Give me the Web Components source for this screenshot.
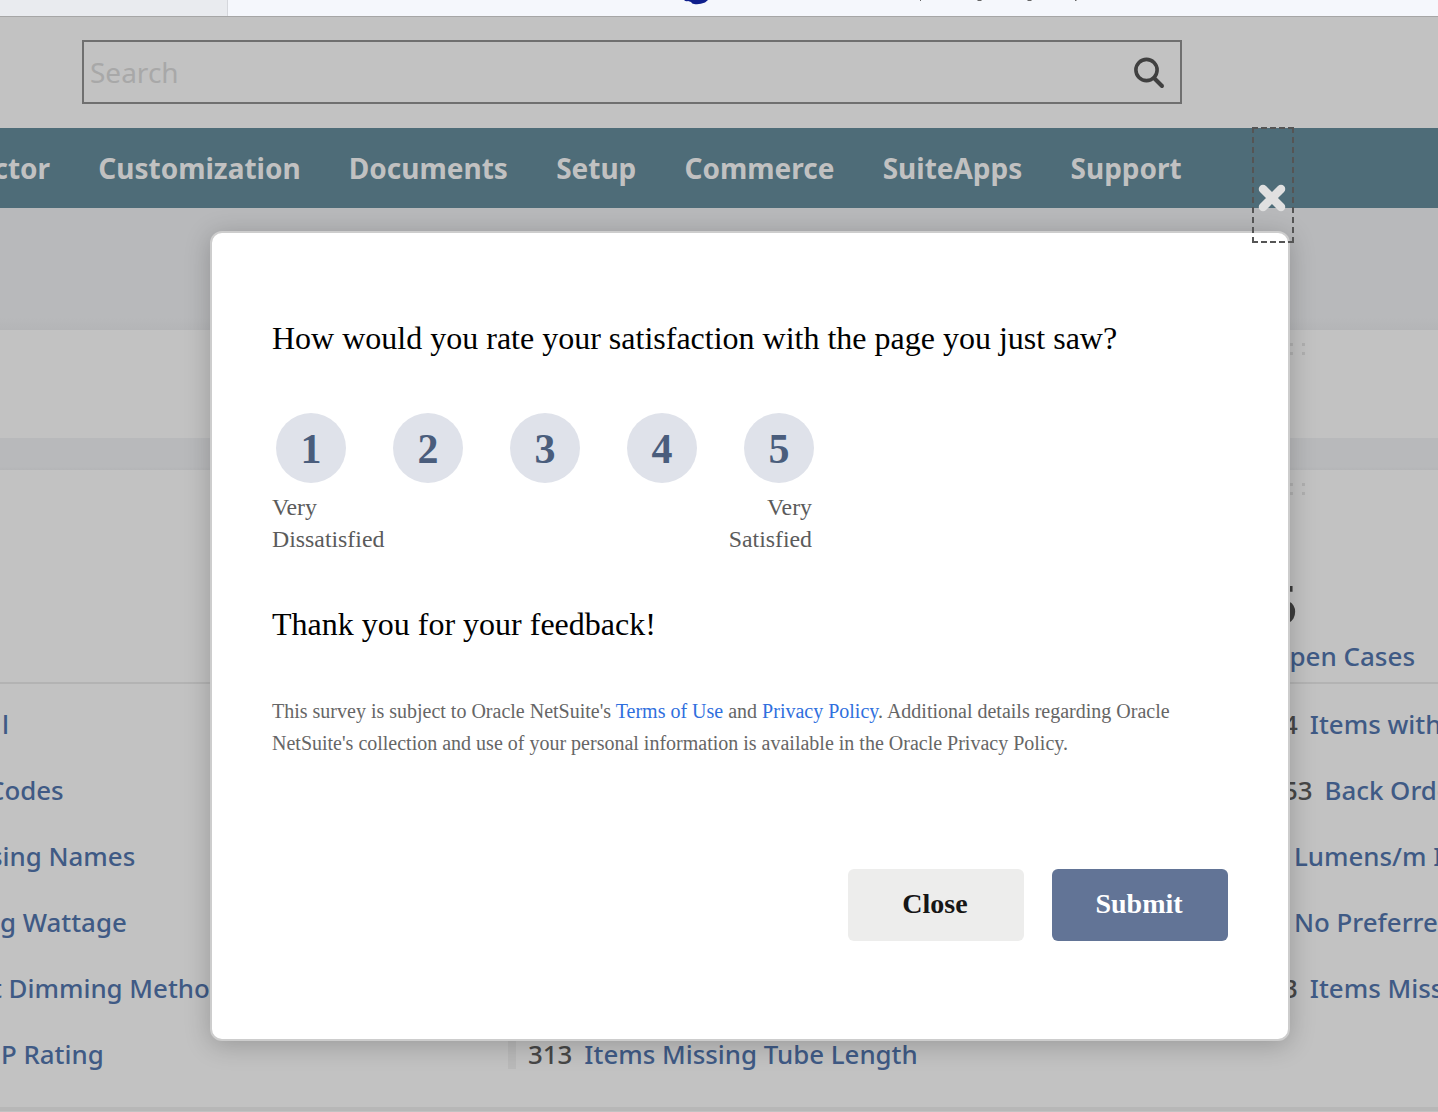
<!DOCTYPE html>
<html>
<head>
<meta charset="utf-8">
<title>Dashboard survey</title>
<style>
  html, body { margin: 0; height: 100%; overflow: hidden; background: #c2c2c2; }
  body { position: relative; font-family: "Noto Sans", sans-serif; }
</style>
</head>
<body>
<tab-strip></tab-strip>
<search-bar></search-bar>
<nav-bar>
  <span style="margin-left:-6.5px">ctor</span>
  <span>Customization</span>
  <span>Documents</span>
  <span>Setup</span>
  <span>Commerce</span>
  <span>SuiteApps</span>
  <span>Support</span>
</nav-bar>
<page-band size="122" tone="dark"></page-band>
<page-band size="108"><grip-dots></grip-dots></page-band>
<page-band size="32" tone="dark"></page-band>
<stat-tile number="5" label="Open Cases"></stat-tile>
<stat-grid>
  <stat-row offset="2" label="l"></stat-row>
  <stat-row offset="-12" label="Codes"></stat-row>
  <stat-row offset="-10" label="sing Names"></stat-row>
  <stat-row offset="0" label="g Wattage"></stat-row>
  <stat-row offset="-8" label="t Dimming Method"></stat-row>
  <stat-row offset="1" label="P Rating"></stat-row>

  <stat-row slot="center" offset="508" bar number="313" label="Items Missing Tube Length"></stat-row>

  <stat-row slot="right" offset="1283" number="4" label="Items with"></stat-row>
  <stat-row slot="right" offset="1283" number="53" label="Back Orders"></stat-row>
  <stat-row slot="right" offset="1294" label="Lumens/m I"></stat-row>
  <stat-row slot="right" offset="1294" label="No Preferred"></stat-row>
  <stat-row slot="right" offset="1283" number="3" label="Items Missing"></stat-row>
</stat-grid>
<survey-modal></survey-modal>

<script>
function shadow(el, html) {
  el.attachShadow({ mode: "open" }).innerHTML = html;
}

class TabStrip extends HTMLElement {
  connectedCallback() {
    shadow(this, `
      <style>
        :host { display: flex; height: 16px; background: #f5f7fc; border-bottom: 1px solid #a6a6a6; }
        .tab { width: 227px; background: #e9ebef; border-right: 1px solid #d5d7dc; }
        svg { display: block; }
      </style>
      <div class="tab"></div>
      <svg width="1210" height="16">
        <path d="M456 0h24l-3 2.5q-6 2.5-11 1.5q-2 0-3-2l-3-1q-2 1-4-1z" fill="#0f1f8c"/>
        <path d="M692 0h1v1h-1zM749 0h5l-1 1h-3zM799 0h5l-1 1h-3zM847 0h2l-1 1h-1z" fill="#666"/>
      </svg>`);
  }
}

class SearchBar extends HTMLElement {
  connectedCallback() {
    shadow(this, `
      <style>
        :host { display: block; padding: 23px 0 24px 82px; }
        .box { box-sizing: border-box; width: 1100px; height: 64px; border: 2px solid #6f6f6f;
               display: flex; align-items: center; justify-content: space-between; padding: 0 15px 0 6px; }
        span { font: 28px "Noto Sans", sans-serif; color: #a8a8a8; }
        svg { display: block; margin-top: 2px; }
      </style>
      <div class="box">
        <span>Search</span>
        <svg width="32" height="32" viewBox="0 0 32 32" fill="none" stroke="#404040">
          <circle cx="13.5" cy="13" r="10.6" stroke-width="3.6"/>
          <path d="M21 21l8 8" stroke-width="4" stroke-linecap="round"/>
        </svg>
      </div>`);
  }
}

class NavBar extends HTMLElement {
  connectedCallback() {
    shadow(this, `
      <style>
        :host { display: flex; align-items: center; gap: 48.2px; height: 80px; background: #4e6c78;
                overflow: hidden; white-space: nowrap;
                font: 700 28px "Noto Sans", sans-serif; color: #c1c1c1; }
      </style>
      <slot></slot>`);
  }
}

class PageBand extends HTMLElement {
  connectedCallback() {
    const dark = this.getAttribute("tone") === "dark";
    shadow(this, `
      <style>
        :host { display: block; height: ${this.getAttribute("size")}px; position: relative;
                background: ${dark ? "linear-gradient(#b8b9bb 90%, #b4b5b7)" : "#c2c2c2"}; }
      </style>
      <slot></slot>`);
  }
}

class GripDots extends HTMLElement {
  connectedCallback() {
    shadow(this, `
      <style>
        :host { display: grid; grid-template-columns: repeat(2, 3px); gap: 6px 9px;
                position: absolute; left: 1290px; top: 13px; }
        i { width: 3px; height: 3px; background: #b0b0b0; }
      </style>
      <i></i><i></i><i></i><i></i>`);
  }
}

class StatTile extends HTMLElement {
  connectedCallback() {
    shadow(this, `
      <style>
        :host { display: block; box-sizing: border-box; height: 214px; padding: 0 0 0 1269px; white-space: nowrap;
                border-bottom: 2px solid #b3b3b3; background: #c2c2c2;
                font-family: "Noto Sans", sans-serif; position: relative; }
        .grip { position: absolute; left: 1290px; top: 13px; display: grid;
                grid-template-columns: repeat(2, 3px); gap: 6px 9px; }
        .grip i { width: 3px; height: 3px; background: #b0b0b0; }
        .n { font-size: 52px; line-height: 60px; font-weight: 600; color: #3c3c3c; padding-top: 104px; margin-left: -1px; }
        .l { font-size: 26px; line-height: 36px; font-weight: 500; color: #3f5a85; margin-top: 4px; }
      </style>
      <div class="grip"><i></i><i></i><i></i><i></i></div>
      <div class="n">${this.getAttribute("number")}</div>
      <div class="l">${this.getAttribute("label")}</div>`);
  }
}

class StatGrid extends HTMLElement {
  connectedCallback() {
    shadow(this, `
      <style>
        :host { display: block; position: relative; height: 427px; padding-top: 7px; box-sizing: border-box;
                background: #c2c2c2; overflow: hidden; border-bottom: 4px solid #b7b7b7; }
        .all { display: grid; }
        .col { display: grid; grid-template-rows: repeat(6, 66px); grid-area: 1 / 1; }
        .center ::slotted(stat-row) { grid-row: 6; }
      </style>
      <div class="all">
        <div class="col"><slot></slot></div>
        <div class="col center"><slot name="center"></slot></div>
        <div class="col"><slot name="right"></slot></div>
      </div>`);
  }
}

class StatRow extends HTMLElement {
  connectedCallback() {
    const number = this.getAttribute("number");
    const offset = this.getAttribute("offset");
    shadow(this, `
      <style>
        :host { display: flex; align-items: center; height: 66px; margin-left: ${offset}px; white-space: nowrap;
                font: 500 25.85px/36px "Noto Sans", sans-serif; }
        .bar { width: 8px; height: 29px; background: #b9b9b9; margin-right: 12px; }
        .num { color: #474747; margin-right: 12px; }
        .label { color: #3f5a85; }
      </style>
      ${this.hasAttribute("bar") ? '<span class="bar"></span>' : ""}
      ${number ? `<span class="num">${number}</span>` : ""}
      <span class="label">${this.getAttribute("label")}</span>`);
  }
}

class RatingScale extends HTMLElement {
  connectedCallback() {
    const items = [1, 2, 3, 4, 5].map((n) => `<div class="dot">${n}</div>`).join("");
    shadow(this, `
      <style>
        :host { display: block; width: 540px; font-family: "Liberation Serif", serif; }
        .dots { display: flex; gap: 47px; padding-left: 4px; }
        .dot { flex: none; width: 70px; height: 70px; border-radius: 50%; background: #dfe2ea; color: #4a5d7c;
               font-size: 42px; font-weight: bold; display: flex; align-items: center; justify-content: center; padding-top: 2px; box-sizing: border-box; }
        .labels { display: flex; justify-content: space-between; margin-top: 8px;
                  font-size: 23.8px; line-height: 32px; color: #5b5b5b; }
        .labels div:last-child { text-align: right; }
      </style>
      <div class="dots">${items}</div>
      <div class="labels"><div>Very<br>Dissatisfied</div><div>Very<br>Satisfied</div></div>`);
  }
}

class ModalButton extends HTMLElement {
  connectedCallback() {
    const primary = this.hasAttribute("primary");
    shadow(this, `
      <style>
        :host { display: flex; align-items: center; justify-content: center; width: 176px; height: 72px;
                box-sizing: border-box; padding: 0 2px 2px 0;
                border-radius: 6px; font: bold 28px "Liberation Serif", serif;
                background: ${primary ? "#627496" : "#ededec"}; color: ${primary ? "#fff" : "#161616"}; }
      </style>
      <slot></slot>`);
  }
}

class SurveyModal extends HTMLElement {
  connectedCallback() {
    shadow(this, `
      <style>
        :host { position: absolute; left: 210px; top: 231px; width: 1080px; height: 810px; box-sizing: border-box;
                background: #fff; border: 2px solid #cdcdcd; border-radius: 12px;
                box-shadow: 0 4px 26px rgba(0,0,0,.22); padding: 0 60px;
                font-family: "Liberation Serif", serif; display: flex; flex-direction: column; }
        h2 { margin: 85px 0 0; font-weight: normal; font-size: 32px; line-height: 40px; color: #000; }
        rating-scale { margin-top: 55px; }
        h3 { margin: 49px 0 0; font-weight: normal; font-size: 32px; line-height: 40px; color: #000; }
        p { margin: 51px 0 0; font-size: 20px; line-height: 32px; color: #666; white-space: nowrap; }
        a { color: #2f6fde; text-decoration: none; }
        .actions { margin-top: auto; margin-bottom: 98px; display: flex; justify-content: flex-end; gap: 28px; }
        .close { position: absolute; left: 1040px; top: -106px; width: 42px; height: 116px; box-sizing: border-box;
                 border: 2px dashed #555; }
        .close svg { position: absolute; left: 4px; top: 55px; }
      </style>
      <h2>How would you rate your satisfaction with the page you just saw?</h2>
      <rating-scale></rating-scale>
      <h3>Thank you for your feedback!</h3>
      <p>This survey is subject to Oracle NetSuite's <a>Terms of Use</a> and <a>Privacy Policy</a>. Additional details regarding Oracle<br>NetSuite's collection and use of your personal information is available in the Oracle Privacy Policy.</p>
      <div class="actions">
        <modal-button>Close</modal-button>
        <modal-button primary>Submit</modal-button>
      </div>
      <div class="close">
        <svg width="28" height="28" viewBox="0 0 28 28"><path d="M5 5L23 23M23 5L5 23" stroke="#e0e0e0" stroke-width="8.5" stroke-linecap="round"/></svg>
      </div>`);
  }
}

customElements.define("tab-strip", TabStrip);
customElements.define("search-bar", SearchBar);
customElements.define("nav-bar", NavBar);
customElements.define("page-band", PageBand);
customElements.define("grip-dots", GripDots);
customElements.define("stat-tile", StatTile);
customElements.define("stat-grid", StatGrid);
customElements.define("stat-row", StatRow);
customElements.define("rating-scale", RatingScale);
customElements.define("modal-button", ModalButton);
customElements.define("survey-modal", SurveyModal);
</script>
</body>
</html>
